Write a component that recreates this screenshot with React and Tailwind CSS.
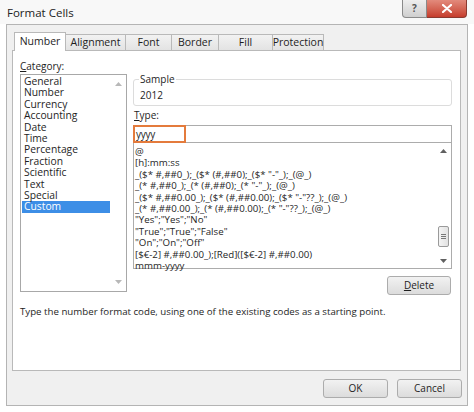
import React from 'react';

const categories = ['General', 'Number', 'Currency', 'Accounting', 'Date', 'Time', 'Percentage', 'Fraction', 'Scientific', 'Text', 'Special', 'Custom'];

const codes = [
    '@',
    '[h]:mm:ss',
    '_($* #,##0_);_($* (#,##0);_($* "-"_);_(@_)',
    '_(* #,##0_);_(* (#,##0);_(* "-"_);_(@_)',
    '_($* #,##0.00_);_($* (#,##0.00);_($* "-"??_);_(@_)',
    '_(* #,##0.00_);_(* (#,##0.00);_(* "-"??_);_(@_)',
    '"Yes";"Yes";"No"',
    '"True";"True";"False"',
    '"On";"On";"Off"',
    '[$€-2] #,##0.00_);[Red]([$€-2] #,##0.00)',
    'mmm-yyyy',
];

const tabs = ['Number', 'Alignment', 'Font', 'Border', 'Fill', 'Protection'];
const tabWidths = ['w-[52px]', 'w-[61px]', 'w-[47px]', 'w-[48px]', 'w-[55px]', 'w-[52px]'];

const Arrow = ({ up, color }) => (
    <svg width="7" height="4" viewBox="0 0 7 4">
        <path d={up ? 'M0 4 L3.5 0 L7 4 Z' : 'M0 0 L3.5 4 L7 0 Z'} fill={color} />
    </svg>
);

const Button = ({ children, className = '' }) => (
    <div className={`h-[19px] flex items-center justify-center rounded-[3px] border border-[#acacac] bg-gradient-to-b from-[#f2f2f2] to-[#dcdcdc] text-[#1e1e1e] ${className}`}>
        {children}
    </div>
);

export default function App() {
    return (
        <div className="w-[474px] h-[412px] bg-white overflow-hidden font-['Open_Sans',sans-serif] text-[9.7px] text-[#1e1e1e]">
            {/* title bar */}
            <div className="h-[24px] flex items-start justify-between bg-[#f8f8f8]">
                <div className="pl-[7px] pt-[5px] text-[11.5px] leading-[16px] text-[#222]">Format Cells</div>
                <div className="flex mr-[7px]">
                    <div className="w-[25px] h-[18px] flex items-center justify-center border border-[#8a8a8a] border-t-0 rounded-bl-[4px] bg-gradient-to-b from-[#eeeeee] to-[#cfcfcf] text-[10px] font-bold text-[#555]">?</div>
                    <div className="w-[40px] h-[18px] flex items-center justify-center border border-[#8a3a30] border-t-0 border-l-0 rounded-br-[4px] bg-gradient-to-b from-[#e28a7c] to-[#c53c2c]">
                        <svg width="10" height="9" viewBox="0 0 10 9">
                            <path d="M1 1 L9 8 M9 1 L1 8" stroke="white" strokeWidth="2.2" strokeLinecap="round" />
                        </svg>
                    </div>
                </div>
            </div>

            {/* client area */}
            <div className="ml-[6px] w-[462px] h-[382px] border border-[#b4b4b4] bg-[#f0f0f0] flex flex-col">
                <div className="ml-[5px] mt-[7px] w-[449px]">
                    {/* tabs */}
                    <div className="flex items-end h-[18px] pl-[2px]">
                        {tabs.map((t, i) =>
                            i === 0 ? (
                                <div key={t} className={`${tabWidths[i]} h-[19px] -mb-px relative bg-white border border-b-0 border-[#b9b9b9] flex items-center justify-center text-[10.5px] pb-[1px]`}>
                                    {t}
                                </div>
                            ) : (
                                <div key={t} className={`${tabWidths[i]} h-[16px] -ml-px bg-gradient-to-b from-[#f2f2f2] to-[#e3e3e3] border border-b-0 border-[#b9b9b9] flex items-center justify-center text-[10.5px]`}>
                                    {t}
                                </div>
                            )
                        )}
                    </div>

                    {/* panel */}
                    <div className="h-[321px] bg-white border border-[#b9b9b9] flex flex-col">
                        <div className="flex items-start pl-[7px]">
                            {/* category column */}
                            <div className="flex flex-col">
                                <div className="mt-[8px] h-[14px] leading-[14px] text-[10px]">
                                    <span className="underline">C</span>ategory:
                                </div>
                                <div className="mt-[1px] w-[107px] h-[218px] border border-[#a8a8a8] bg-white flex">
                                    <div className="flex-1 pl-[1px] pt-[1px]">
                                        {categories.map((c) => (
                                            <div key={c} className={`h-[11.4px] leading-[11.4px] pl-[2px] text-[10.3px] ${c === 'Custom' ? 'bg-[#3d8ee6] text-white' : ''}`}>
                                                {c}
                                            </div>
                                        ))}
                                    </div>
                                    <div className="w-[16px] flex flex-col items-center justify-between py-[7px]">
                                        <Arrow up color="#b8b8b8" />
                                        <Arrow color="#b8b8b8" />
                                    </div>
                                </div>
                            </div>

                            {/* type column */}
                            <div className="ml-[6px] w-[319px] flex flex-col">
                                <fieldset className="mt-[22px] h-[33px] border border-[#dcdcdc] rounded-[3px] px-[5px]">
                                    <legend className="px-[1px] leading-[12px] text-[10px]">Sample</legend>
                                    <div className="pl-[1px] leading-[14px] mt-[3px] text-[10px]">2012</div>
                                </fieldset>
                                <div className="mt-[2px] h-[14px] leading-[14px] pl-[1px] text-[10px]">
                                    <span className="underline">T</span>ype:
                                </div>
                                <div className="relative mt-[3px] h-[18px] border border-[#acacac] bg-white flex items-center pl-[2px] text-[10px] tracking-[-0.3px]">
                                    yyyy
                                    <div className="absolute -left-px -top-px w-[53px] h-[18px] border-2 border-[#e47b3c]" />
                                </div>
                                <div className="-mt-px h-[127px] border border-[#acacac] bg-white flex">
                                    <div className="flex-1 pl-[1px] pt-[3px]">
                                        {codes.map((c) => (
                                            <div key={c} className="h-[11.4px] leading-[11.4px] whitespace-nowrap">{c}</div>
                                        ))}
                                    </div>
                                    <div className="w-[16px] flex flex-col items-center pt-[6px] pb-[5px]">
                                        <Arrow up color="#606060" />
                                        <div className="mt-[73px] w-[11px] h-[21px] rounded-[2px] border border-[#9a9a9a] bg-gradient-to-r from-[#f4f4f4] to-[#e2e2e2] flex flex-col items-center justify-center gap-[1px]">
                                            <div className="w-[5px] h-px bg-[#777]" />
                                            <div className="w-[5px] h-px bg-[#777]" />
                                            <div className="w-[5px] h-px bg-[#777]" />
                                        </div>
                                        <div className="flex-1" />
                                        <Arrow color="#606060" />
                                    </div>
                                </div>
                                <div className="flex justify-end mt-[7px] pr-[1px]">
                                    <Button className="w-[64px] text-[10px]">
                                        <span><span className="underline">D</span>elete</span>
                                    </Button>
                                </div>
                            </div>
                        </div>
                        <div className="pl-[7px] mt-[10px] leading-[14px]">
                            Type the number format code, using one of the existing codes as a starting point.
                        </div>
                    </div>
                </div>

                {/* footer buttons */}
                <div className="flex justify-end gap-[9px] mt-[8px] mr-[5px] text-[10px]">
                    <Button className="w-[65px] border-[#3c7fb1] from-[#eaf6fd] to-[#bee6fd]">OK</Button>
                    <Button className="w-[65px]">Cancel</Button>
                </div>
            </div>
        </div>
    );
}
